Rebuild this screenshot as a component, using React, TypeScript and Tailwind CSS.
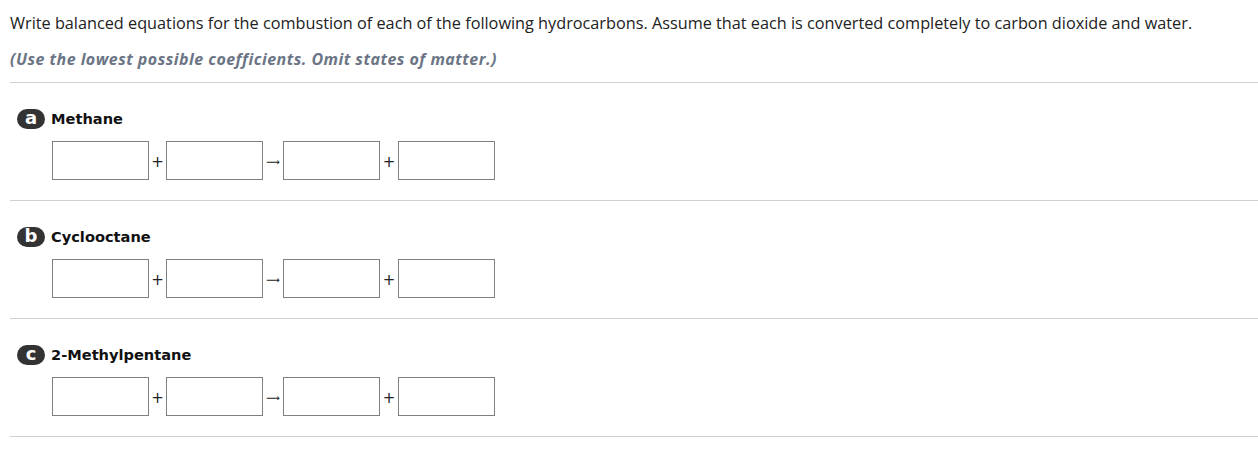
const parts = [
  { letter: "a", name: "Methane" },
  { letter: "b", name: "Cyclooctane" },
  { letter: "c", name: "2-Methylpentane" },
]

function Box() {
  return <div className="w-[97px] h-[39px] border border-[#808080] bg-white" />
}

function Plus() {
  return (
    <div className="flex items-center justify-center h-[39px] pt-[3px] text-[15px] text-[#222] font-['DejaVu_Sans',sans-serif]">
      +
    </div>
  )
}

function Arrow() {
  return (
    <div className="flex items-center justify-center h-[39px] pt-[4px] text-[9.5px] text-[#222] font-['DejaVu_Sans',sans-serif]">
      ⟶
    </div>
  )
}

export default function App() {
  return (
    <div className="w-[1258px] h-[457px] bg-white pl-[10px] font-['Open_Sans',sans-serif]">
      <div className="pt-[12px] text-[16.25px] leading-[22px] text-[#222]">
        Write balanced equations for the combustion of each of the following hydrocarbons. Assume that each is converted completely to carbon dioxide and water.
      </div>
      <div className="mt-[14px] text-[16px] leading-[22px] font-bold italic tracking-[0.47px] text-[#6b7585]">
        (Use the lowest possible coefficients. Omit states of matter.)
      </div>
      <div className="mt-[12px] border-t border-[#d0d0d0]" />
      {parts.map((p) => (
        <div key={p.letter}>
          <div className="mt-[26px] flex items-center h-[20px]">
            <div className="ml-[7px] w-[28px] h-[20px] rounded-full bg-[#333] text-white flex items-center justify-center text-[18px] font-bold leading-none pb-[2px] font-['Verdana','DejaVu_Sans',sans-serif]">
              {p.letter}
            </div>
            <div className="ml-[6px] text-[14.6px] font-bold text-[#111] font-['DejaVu_Sans',sans-serif]">
              {p.name}
            </div>
          </div>
          <div className="mt-[12px] ml-[42px] flex items-center">
            <Box />
            <div className="w-[17px]"><Plus /></div>
            <Box />
            <div className="w-[20px]"><Arrow /></div>
            <Box />
            <div className="w-[18px]"><Plus /></div>
            <Box />
          </div>
          <div className="mt-[20px] border-t border-[#d0d0d0]" />
        </div>
      ))}
    </div>
  )
}
